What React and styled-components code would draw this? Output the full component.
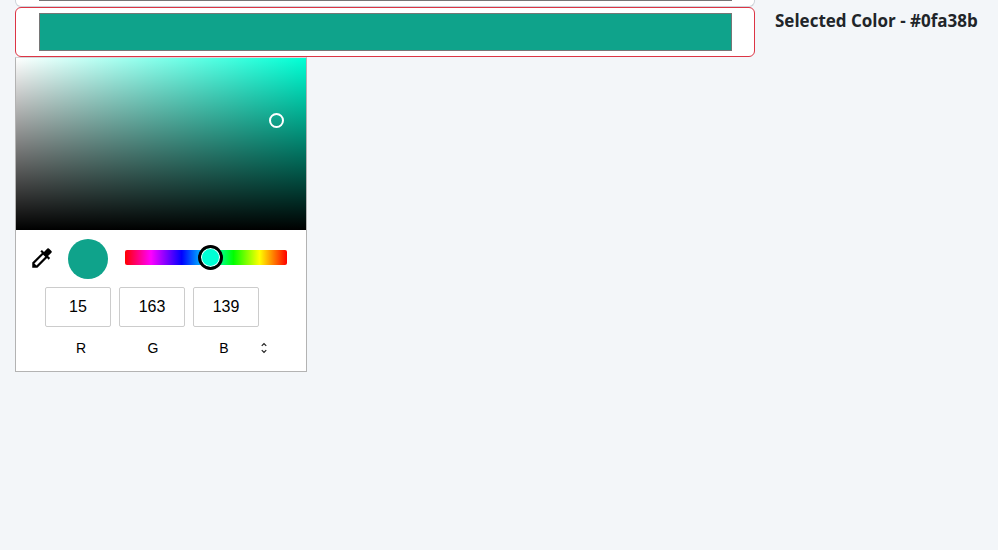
import React from 'react';
import styled, { createGlobalStyle } from 'styled-components';
import { MdColorize } from 'react-icons/md';

const GlobalStyle = createGlobalStyle`
  html, body {
    margin: 0;
    padding: 0;
    background: #f3f6f9;
    overflow: hidden;
  }
`;

const Page = styled.div`
  display: flex;
  align-items: flex-start;
  padding-left: 15px;
  height: 550px;
`;

const Column = styled.div`
  width: 740px;
  flex: none;
`;

const ClippedCard = styled.div`
  box-sizing: border-box;
  height: 7px;
  background: #fff;
  border: 1px solid #ced4da;
  border-top: none;
  border-radius: 0 0 6px 6px;
  padding: 0 22px 0 23px;
`;

const ClippedSwatch = styled.div`
  height: 1px;
  background: #757575;
`;

const ColorCard = styled.div`
  box-sizing: border-box;
  height: 50px;
  background: #fff;
  border: 1px solid #dc3545;
  border-radius: 6px;
  padding: 5px 22px 5px 23px;
`;

const Swatch = styled.div`
  box-sizing: border-box;
  height: 38px;
  background: ${p => p.$color};
  border: 1px solid #767676;
`;

const Picker = styled.div`
  box-sizing: border-box;
  width: 292px;
  height: 315px;
  background: #fff;
  border: 1px solid #b3b3b3;
  border-top-color: #d4d6d8;
`;

const Saturation = styled.div`
  position: relative;
  height: 172px;
  background:
    linear-gradient(to top, #000, rgba(0, 0, 0, 0)),
    linear-gradient(to right, #fff, rgba(255, 255, 255, 0)),
    ${p => p.$hue};
`;

const SaturationPointer = styled.div`
  position: absolute;
  left: 253px;
  top: 55px;
  width: 15px;
  height: 15px;
  box-sizing: border-box;
  border: 2px solid #fff;
  border-radius: 50%;
`;

const Controls = styled.div`
  display: flex;
  align-items: center;
  height: 57px;
  padding-top: 1px;
  box-sizing: border-box;
`;

const Dropper = styled.div`
  width: 26px;
  margin-left: 13px;
  margin-top: -2px;
  display: flex;
  color: #000;
`;

const Preview = styled.div`
  width: 40px;
  height: 40px;
  margin-left: 13px;
  border-radius: 50%;
  background: ${p => p.$color};
`;

const HueTrack = styled.div`
  position: relative;
  width: 162px;
  height: 15px;
  margin-left: 17px;
  margin-top: -3px;
  border-radius: 2px;
  background: linear-gradient(to right, #f00, #f0f 16%, #00f 35%, #0ff 52%, #0f0 67%, #ff0 83%, #f00);
`;

const HueThumb = styled.div`
  position: absolute;
  left: 73px;
  top: -5px;
  width: 25px;
  height: 25px;
  box-sizing: border-box;
  border: 3px solid #000;
  border-radius: 50%;
  background: ${p => p.$hue};
  box-shadow: inset 0 0 0 1px #fff;
`;

const Inputs = styled.div`
  display: flex;
  gap: 8px;
  padding-left: 29px;
`;

const ChannelInput = styled.div`
  box-sizing: border-box;
  width: 66px;
  height: 40px;
  display: flex;
  align-items: center;
  justify-content: center;
  border: 1px solid #ccc;
  border-radius: 2px;
  font: 16px "Liberation Sans", Arial, sans-serif;
  color: #000;
`;

const Labels = styled.div`
  display: flex;
  align-items: center;
  height: 42px;
  padding-left: 29px;
`;

const ChannelLabel = styled.div`
  width: ${p => p.$w}px;
  text-align: center;
  font: 14px "Liberation Sans", Arial, sans-serif;
  color: #000;
`;

const Toggle = styled.svg`
  width: 14px;
  height: 14px;
  margin-left: -2px;
  display: block;
`;

const SelectedText = styled.div`
  margin: 10px 0 0 20px;
  font: 700 17px "Open Sans", sans-serif;
  line-height: 22px;
  color: #212529;
  white-space: nowrap;
`;

const HUE = '#00ffd5';
const COLOR = '#0fa38b';

export default function App() {
  return (
    <>
      <GlobalStyle />
      <Page>
        <Column>
          <ClippedCard>
            <ClippedSwatch />
          </ClippedCard>
          <ColorCard>
            <Swatch $color={COLOR} />
          </ColorCard>
          <Picker>
            <Saturation $hue={HUE}>
              <SaturationPointer />
            </Saturation>
            <Controls>
              <Dropper>
                <MdColorize size={26} />
              </Dropper>
              <Preview $color={COLOR} />
              <HueTrack>
                <HueThumb $hue={HUE} />
              </HueTrack>
            </Controls>
            <Inputs>
              <ChannelInput>15</ChannelInput>
              <ChannelInput>163</ChannelInput>
              <ChannelInput>139</ChannelInput>
            </Inputs>
            <Labels>
              <ChannelLabel $w={72}>R</ChannelLabel>
              <ChannelLabel $w={72}>G</ChannelLabel>
              <ChannelLabel $w={70}>B</ChannelLabel>
              <Toggle viewBox="0 0 24 24">
                <path d="M12,18.17L8.83,15L7.42,16.41L12,21L16.59,16.41L15.17,15M12,5.83L15.17,9L16.58,7.59L12,3L7.41,7.59L8.83,9L12,5.83Z" fill="#222" />
              </Toggle>
            </Labels>
          </Picker>
        </Column>
        <SelectedText>Selected Color - #0fa38b</SelectedText>
      </Page>
    </>
  );
}
